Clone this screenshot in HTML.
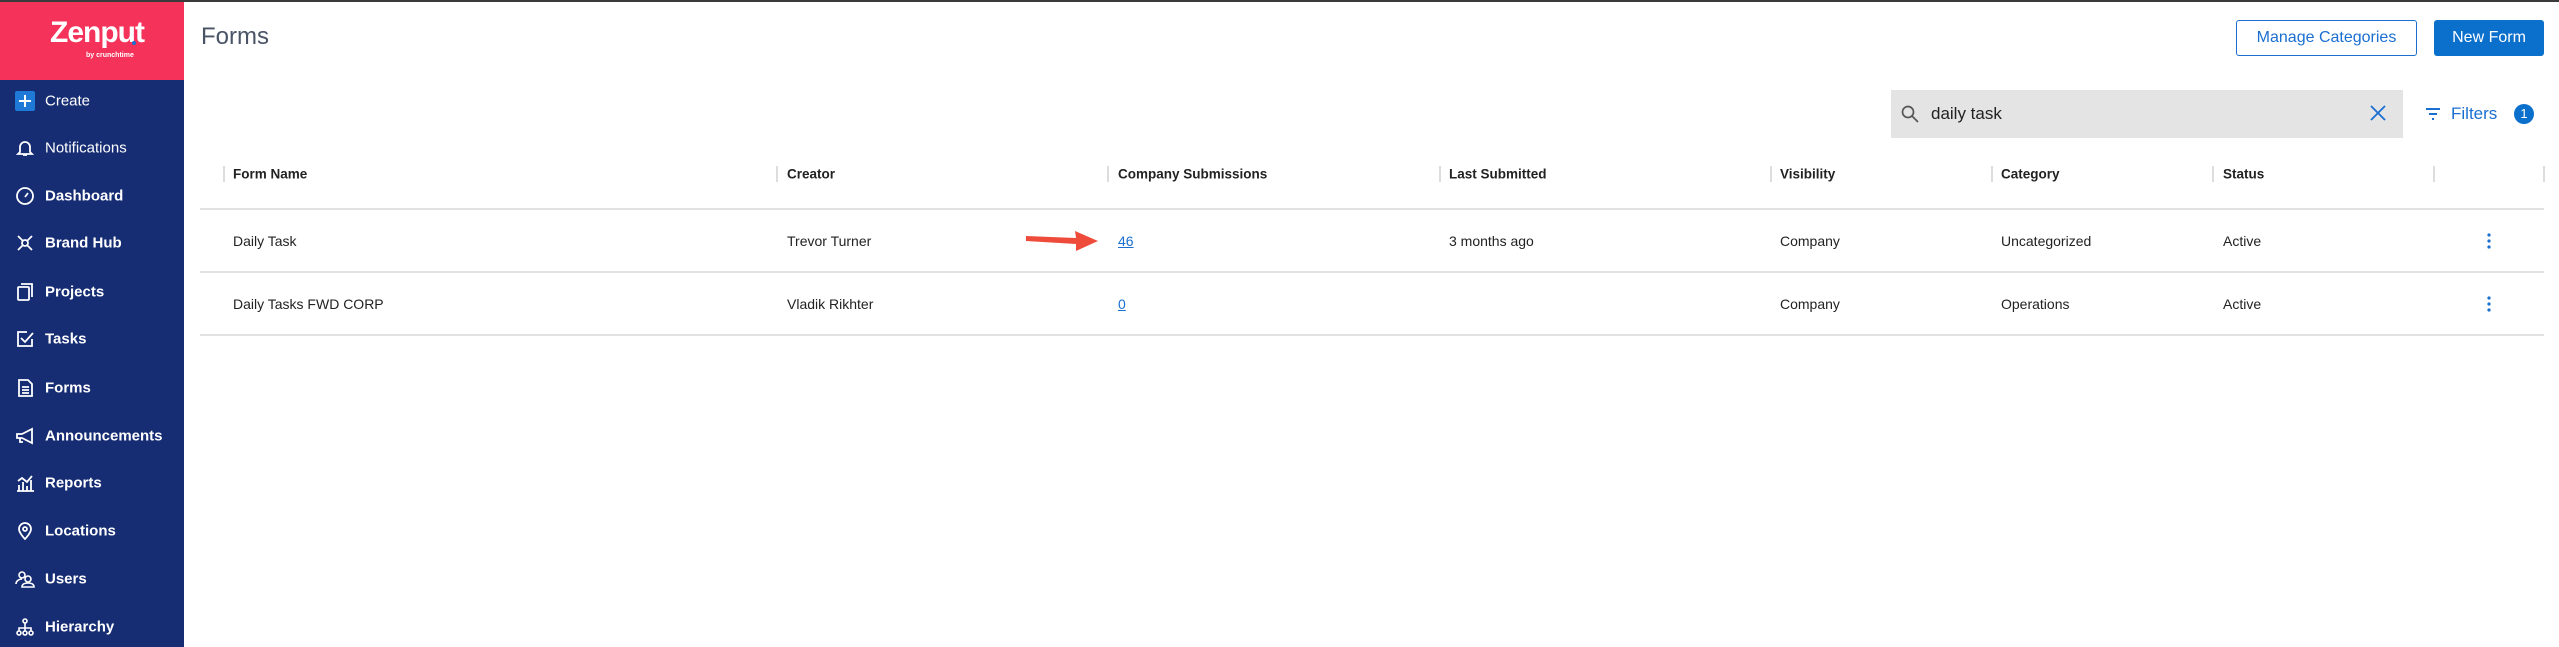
<!DOCTYPE html>
<html><head><meta charset="utf-8"><style>
*{margin:0;padding:0;box-sizing:border-box}
body{width:2559px;height:647px;overflow:hidden;background:#fff;font-family:"Liberation Sans",sans-serif;position:relative}
.top{position:absolute;left:0;top:0;width:2559px;height:2px;background:#3a3a3a}
.side{position:absolute;left:0;top:2px;width:184px;height:645px;background:#162c73}
.logo{position:absolute;left:0;top:0;width:184px;height:78px;background:#f5325a}
.logo .z{position:absolute;left:50px;top:14px;color:#fff;font-size:30px;font-weight:bold;letter-spacing:-1px}
.logo .d{position:absolute;left:132px;top:39px;width:4px;height:4px;background:#1a6fd0;border-radius:50%}
.logo .b{position:absolute;left:86px;top:50px;color:#fff;font-size:7px;font-weight:bold}
.nav{position:absolute;left:45px;color:#fff;font-size:15px;font-weight:bold;transform:translateY(-50%)}
.ic{position:absolute;left:15px;width:20px;height:20px;transform:translateY(-50%)}
.t{position:absolute;font-size:14px;color:#222;transform:translateY(-50%);white-space:nowrap}
.h{font-weight:bold;font-size:13.5px;color:#222}
.sep{position:absolute;width:2px;height:16px;background:#ddd;top:166px}
.line{position:absolute;left:200px;width:2344px;height:2px;background:#e2e2e2}
a{color:#1a6fd0;text-decoration:underline}
</style></head><body>
<div class="top"></div>
<div class="side">
<div class="logo"><div class="z">Zenput</div><div class="d"></div><div class="b">by crunchtime</div></div>
</div>
<svg class="ic" style="top:101px" viewBox="0 0 20 20"><rect width="20" height="20" rx="2" fill="#1e7ad6"/><path d="M10 4v12M4 10h12" stroke="#fff" stroke-width="2"/></svg>
<div class="nav" style="top:101px;font-weight:normal">Create</div>
<svg class="ic" style="top:148px" viewBox="0 0 20 20" fill="none" stroke="#fff" stroke-width="1.8"><path d="M5 14V9a5 5 0 0110 0v5l2 2H3z M8 17h4"/></svg>
<div class="nav" style="top:148px;font-weight:normal">Notifications</div>
<svg class="ic" style="top:196px" viewBox="0 0 20 20" fill="none" stroke="#fff" stroke-width="1.8"><circle cx="10" cy="10" r="8"/><path d="M10 11l3-4"/></svg>
<div class="nav" style="top:196px">Dashboard</div>
<svg class="ic" style="top:243px" viewBox="0 0 20 20" fill="none" stroke="#fff" stroke-width="1.8"><circle cx="10" cy="10" r="3"/><path d="M3 3l5 5M17 3l-5 5M3 17l5-5M17 17l-5-5"/></svg>
<div class="nav" style="top:243px">Brand Hub</div>
<svg class="ic" style="top:292px" viewBox="0 0 20 20" fill="none" stroke="#fff" stroke-width="1.8"><rect x="3" y="5" width="11" height="13" rx="1"/><path d="M6 2h11v13"/></svg>
<div class="nav" style="top:292px">Projects</div>
<svg class="ic" style="top:339px" viewBox="0 0 20 20" fill="none" stroke="#fff" stroke-width="1.8"><path d="M17 10v7H3V3h9"/><path d="M6 9l4 4 8-9"/></svg>
<div class="nav" style="top:339px">Tasks</div>
<svg class="ic" style="top:388px" viewBox="0 0 20 20" fill="none" stroke="#fff" stroke-width="1.8"><path d="M4 2h9l4 4v12H4z M7 9h7M7 12h7M7 15h7"/></svg>
<div class="nav" style="top:388px">Forms</div>
<svg class="ic" style="top:436px" viewBox="0 0 20 20" fill="none" stroke="#fff" stroke-width="1.8"><path d="M2 8h5l10-5v14L7 12H2z M5 12v4h3"/></svg>
<div class="nav" style="top:436px">Announcements</div>
<svg class="ic" style="top:483px" viewBox="0 0 20 20" fill="none" stroke="#fff" stroke-width="1.8"><path d="M2 18h17M4 18v-6M8 18V9M12 18v-5M16 18V7M3 8l4-3 5 4 5-6"/></svg>
<div class="nav" style="top:483px">Reports</div>
<svg class="ic" style="top:531px" viewBox="0 0 20 20" fill="none" stroke="#fff" stroke-width="1.8"><path d="M10 18s6-6 6-10a6 6 0 00-12 0c0 4 6 10 6 10z"/><circle cx="10" cy="8" r="2"/></svg>
<div class="nav" style="top:531px">Locations</div>
<svg class="ic" style="top:579px" viewBox="0 0 20 20" fill="none" stroke="#fff" stroke-width="1.6"><circle cx="7" cy="6" r="3"/><circle cx="13" cy="10" r="3"/><path d="M1 15c0-3 3-5 6-5M7 18c0-3 3-4 6-4s6 1 6 4z"/></svg>
<div class="nav" style="top:579px">Users</div>
<svg class="ic" style="top:627px" viewBox="0 0 20 20" fill="none" stroke="#fff" stroke-width="1.6"><circle cx="10" cy="4" r="2"/><path d="M10 6v5M4 14v-3h12v3M10 11v3"/><circle cx="4" cy="16" r="2"/><circle cx="10" cy="16" r="2"/><circle cx="16" cy="16" r="2"/></svg>
<div class="nav" style="top:627px">Hierarchy</div>

<div class="t" style="left:201px;top:37px;font-size:24px;color:#4a5466">Forms</div>
<div style="position:absolute;left:2236px;top:20px;width:181px;height:36px;border:1px solid #1a6fd0;border-radius:3px;color:#1a6fd0;font-size:16px;text-align:center;line-height:34px">Manage Categories</div>
<div style="position:absolute;left:2434px;top:20px;width:110px;height:36px;background:#0b6fcc;border-radius:3px;color:#fff;font-size:16px;text-align:center;line-height:36px">New Form</div>
<div style="position:absolute;left:1891px;top:90px;width:512px;height:48px;background:#e4e4e4"></div>
<svg style="position:absolute;left:1901px;top:105px" width="18" height="18" viewBox="0 0 18 18" fill="none" stroke="#555" stroke-width="1.7"><circle cx="7" cy="7" r="5.5"/><path d="M11 11l6 6"/></svg>
<div class="t" style="left:1931px;top:114px;font-size:17px">daily task</div>
<svg style="position:absolute;left:2370px;top:105px" width="16" height="16" viewBox="0 0 16 16" stroke="#1a6fd0" stroke-width="1.8"><path d="M1 1l14 14M15 1L1 15"/></svg>
<svg style="position:absolute;left:2425px;top:107px" width="16" height="14" viewBox="0 0 16 14" stroke="#1a6fd0" stroke-width="2"><path d="M1 2h14M4 7h8M7 12h2"/></svg>
<div class="t" style="left:2451px;top:114px;font-size:17px;color:#1a6fd0">Filters</div>
<div style="position:absolute;left:2514px;top:104px;width:20px;height:20px;border-radius:50%;background:#0b6fcc;color:#fff;font-size:13px;text-align:center;line-height:20px">1</div>

<div class="sep" style="left:223px"></div><div class="sep" style="left:776px"></div><div class="sep" style="left:1107px"></div><div class="sep" style="left:1439px"></div><div class="sep" style="left:1770px"></div><div class="sep" style="left:1991px"></div><div class="sep" style="left:2212px"></div><div class="sep" style="left:2433px"></div><div class="sep" style="left:2543px"></div>
<div class="t h" style="left:233px;top:174px">Form Name</div>
<div class="t h" style="left:787px;top:174px">Creator</div>
<div class="t h" style="left:1118px;top:174px">Company Submissions</div>
<div class="t h" style="left:1449px;top:174px">Last Submitted</div>
<div class="t h" style="left:1780px;top:174px">Visibility</div>
<div class="t h" style="left:2001px;top:174px">Category</div>
<div class="t h" style="left:2223px;top:174px">Status</div>
<div class="line" style="top:208px"></div>
<div class="t" style="left:233px;top:241px">Daily Task</div>
<div class="t" style="left:787px;top:241px">Trevor Turner</div>
<div class="t" style="left:1118px;top:241px"><a>46</a></div>
<div class="t" style="left:1449px;top:241px">3 months ago</div>
<div class="t" style="left:1780px;top:241px">Company</div>
<div class="t" style="left:2001px;top:241px">Uncategorized</div>
<div class="t" style="left:2223px;top:241px">Active</div>
<div class="line" style="top:271px"></div>
<div class="t" style="left:233px;top:304px">Daily Tasks FWD CORP</div>
<div class="t" style="left:787px;top:304px">Vladik Rikhter</div>
<div class="t" style="left:1118px;top:304px"><a>0</a></div>
<div class="t" style="left:1780px;top:304px">Company</div>
<div class="t" style="left:2001px;top:304px">Operations</div>
<div class="t" style="left:2223px;top:304px">Active</div>
<div class="line" style="top:334px"></div>
<svg style="position:absolute;left:2486px;top:232px" width="6" height="80" viewBox="0 0 6 80" fill="#1a6fd0"><circle cx="3" cy="3" r="1.6"/><circle cx="3" cy="9" r="1.6"/><circle cx="3" cy="15" r="1.6"/><circle cx="3" cy="66" r="1.6"/><circle cx="3" cy="72" r="1.6"/><circle cx="3" cy="78" r="1.6"/></svg>
<svg style="position:absolute;left:1024px;top:228px" width="76" height="24" viewBox="0 0 76 24"><path d="M2 8L52 10L51 3L74 13L52 23L52 16L2 13Z" fill="#ee4b3b"/></svg>
</body></html>
